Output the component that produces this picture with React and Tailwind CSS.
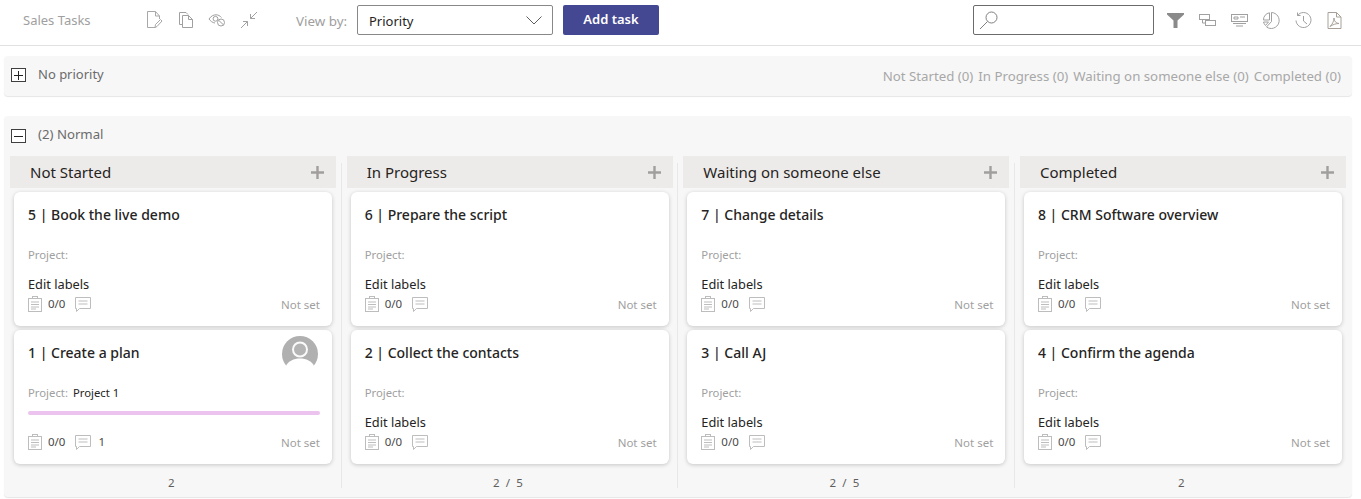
const font = "font-['Noto_Sans',sans-serif]"

function IconNote() {
  return (
    <svg width="18" height="20" viewBox="0 0 18 20" fill="none" stroke="#a8a8a8" strokeWidth="1">
      <path d="M10 17.5H2.5V1.5H10.5L14.5 6V9" />
      <path d="M10.5 1.5V6H14.5" />
      <path d="M10 17.5L10.5 14.5L15.5 9.5L17 11L12 16.5Z" />
    </svg>
  )
}

function IconCopy() {
  return (
    <svg width="16" height="18" viewBox="0 0 16 18" fill="none" stroke="#a0a0a0" strokeWidth="1">
      <path d="M4.5 13.5H1.5V1.5H8L10 3.5" />
      <path d="M4.5 4.5H10.5L14.5 8.5V16.5H4.5Z" />
      <path d="M10.5 4.5V8.5H14.5" />
    </svg>
  )
}

function IconEyeOff() {
  return (
    <svg width="18" height="14" viewBox="0 0 18 14" fill="none" stroke="#a0a0a0" strokeWidth="1">
      <path d="M1 6C3 3 5.5 1.8 8 1.8C10 1.8 12 2.8 13.5 4.5" />
      <path d="M1 6C2.5 8.2 4.5 9.6 7 10" />
      <circle cx="7.5" cy="5.8" r="2.4" />
      <circle cx="13" cy="9.5" r="3.5" />
      <path d="M10.6 7.2L15.4 11.8" />
    </svg>
  )
}

function IconCollapse() {
  return (
    <svg width="18" height="18" viewBox="0 0 18 18" fill="none" stroke="#a0a0a0" strokeWidth="1">
      <path d="M17 1L10.5 7.5M10.5 3V7.5H15" />
      <path d="M1 17L7.5 10.5M3 10.5H7.5V15" />
    </svg>
  )
}

function IconSearch() {
  return (
    <svg width="20" height="20" viewBox="0 0 20 20" fill="none" stroke="#808080" strokeWidth="1">
      <circle cx="12.5" cy="7.5" r="5.5" />
      <path d="M8.5 11.5L1 19" />
    </svg>
  )
}

function IconFilter() {
  return (
    <svg width="17" height="15" viewBox="0 0 17 15" fill="#8a8a8a">
      <path d="M0 0H17V1.5L10.5 7.5V15H6.5V7.5L0 1.5Z" />
    </svg>
  )
}

function IconHierarchy() {
  return (
    <svg width="17" height="12" viewBox="0 0 17 12" fill="none" stroke="#a0a0a0" strokeWidth="1">
      <rect x="0.5" y="0.5" width="10" height="5" />
      <rect x="6.5" y="6.5" width="10" height="5" />
      <path d="M3.5 5.5V9H6.5" />
    </svg>
  )
}

function IconBoard() {
  return (
    <svg width="17" height="13" viewBox="0 0 17 13" fill="none" stroke="#a0a0a0" strokeWidth="1">
      <rect x="0.5" y="0.5" width="16" height="7" />
      <path d="M3 3H7V5H3ZM9 3H14" />
      <path d="M2 9.5H15M5 12H12" />
    </svg>
  )
}

function IconPie() {
  return (
    <svg width="17" height="17" viewBox="0 0 17 17" fill="none" stroke="#a0a0a0" strokeWidth="1">
      <path d="M8.5 0.5A8 8 0 1 1 3.5 15L8.5 9.5Z" />
      <path d="M6.5 0.8A7 7 0 0 0 0.5 8H6.5Z" />
      <path d="M0.5 10H5.5L2.5 13.5A7 7 0 0 1 0.5 10Z" />
    </svg>
  )
}

function IconHistory() {
  return (
    <svg width="17" height="17" viewBox="0 0 17 17" fill="none" stroke="#a0a0a0" strokeWidth="1">
      <path d="M2.5 3.5A7.5 7.5 0 1 1 1 8.5" />
      <path d="M2.5 0.5V3.5H5.5" />
      <path d="M8.5 4V9L12 12" />
    </svg>
  )
}

function IconPdf() {
  return (
    <svg width="15" height="17" viewBox="0 0 15 17" fill="none" stroke="#a8a098" strokeWidth="1">
      <path d="M1 0.5H9.5L14 5V16.5H1Z" />
      <path d="M9.5 0.5V5H14" />
      <path d="M3 14.5C5 13 7 9 7 6C7 9 9 11.5 12 11.5C9 11.5 6 12.5 3 14.5Z" />
    </svg>
  )
}

function IconTasks() {
  return (
    <svg width="14" height="16" viewBox="0 0 14 16" fill="none" stroke="#bdbdbd" strokeWidth="1">
      <rect x="0.5" y="2.5" width="13" height="13" />
      <rect x="4.5" y="0.5" width="5" height="2" />
      <path d="M3 6H11M3 8.5H11M3 11H11M3 13H8" />
    </svg>
  )
}

function IconComment() {
  return (
    <svg width="16" height="15" viewBox="0 0 16 15" fill="none" stroke="#bdbdbd" strokeWidth="1">
      <path d="M0.5 0.5H15.5V11.5H4.5L1.5 14.5V11.5H0.5Z" />
      <path d="M3.5 4H12.5M3.5 7H12.5" />
    </svg>
  )
}

function Toggle({ open }) {
  return (
    <span className="flex h-[14px] w-[15px] items-center justify-center border border-[#3f3f3f] bg-white">
      <svg width="9" height="9" viewBox="0 0 9 9" stroke="#222" strokeWidth="1">
        <path d="M0 4.5H9" />
        {!open && <path d="M4.5 0V9" />}
      </svg>
    </span>
  )
}

function Avatar() {
  return (
    <svg width="36" height="36" viewBox="0 0 36 36">
      <circle cx="18" cy="18" r="18" fill="#b0b0b0" />
      <circle cx="18" cy="13.5" r="7" fill="#b4b4b4" stroke="#fafafa" strokeWidth="2" />
      <path d="M4 30C6 25 12 22.5 18 22.5C24 22.5 30 25 32 30V36H4Z" fill="#fff" />
    </svg>
  )
}

function Card({ id, title, project, count }) {
  return (
    <div className="flex h-[134px] flex-col rounded-md bg-white pl-[14px] pr-[12px] shadow-[0_1px_4px_rgba(0,0,0,0.2)]">
      <div className="flex h-[46px] items-start justify-between">
        <div className="mt-[10px] h-[26px] text-[14px] leading-[26px] font-medium text-[#252423]">
          {id} | {title}
        </div>
        {project && (
          <div className="mr-[2px] mt-[6px]">
            <Avatar />
          </div>
        )}
      </div>
      <div className="mt-[9px] flex h-[16px] items-center gap-[5px] text-[11.3px] leading-[16px]">
        <span className="text-[#a0a0a0]">Project:</span>
        {project && <span className="text-[#252423]">{project}</span>}
      </div>
      <div className="h-[32px]">
        {project ? (
          <div className="mt-[10px] h-[4px] rounded-sm bg-[#ecc2ee]" />
        ) : (
          <div className="mt-[12px] h-[18px] text-[12.8px] leading-[18px] text-[#252423]">Edit labels</div>
        )}
      </div>
      <div className="flex h-[18px] items-center text-[11.5px] text-[#4a4a4a]">
        <IconTasks />
        <span className="ml-[6px]">0/0</span>
        <span className="ml-[10px] flex">
          <IconComment />
        </span>
        {count && <span className="ml-[7px]">{count}</span>}
        <span className="ml-auto pt-[2px] text-[#a0a0a0]">Not set</span>
      </div>
    </div>
  )
}

const columns = [
  {
    name: "Not Started",
    footer: "2",
    cards: [
      { id: 5, title: "Book the live demo" },
      { id: 1, title: "Create a plan", project: "Project 1", count: "1" },
    ],
  },
  {
    name: "In Progress",
    footer: "2 / 5",
    cards: [
      { id: 6, title: "Prepare the script" },
      { id: 2, title: "Collect the contacts" },
    ],
  },
  {
    name: "Waiting on someone else",
    footer: "2 / 5",
    cards: [
      { id: 7, title: "Change details" },
      { id: 3, title: "Call AJ" },
    ],
  },
  {
    name: "Completed",
    footer: "2",
    cards: [
      { id: 8, title: "CRM Software overview" },
      { id: 4, title: "Confirm the agenda" },
    ],
  },
]

function Column({ column }) {
  return (
    <div className="w-[326px] shrink-0">
      <div className="flex h-[32px] items-center justify-between bg-[#edebe9] pl-[20px] pr-[12px]">
        <span className="text-[15px] text-[#252423]">{column.name}</span>
        <svg width="13" height="13" viewBox="0 0 13 13" stroke="#a19f9d" strokeWidth="2.4">
          <path d="M0 6.5H13M6.5 0V13" />
        </svg>
      </div>
      <div className="mt-[4px] flex flex-col gap-[4px] px-[4px]">
        {column.cards.map((card) => (
          <Card key={card.id} {...card} />
        ))}
      </div>
      <div className="mt-[9px] pr-[2px] text-center text-[11.5px] leading-[20px] tracking-[1.6px] text-[#605e5c]">
        {column.footer}
      </div>
    </div>
  )
}

export default function App() {
  return (
    <div className={`h-[499px] w-[1361px] overflow-hidden bg-white ${font}`}>
      <header className="flex h-[46px] items-center border-b border-[#e1e1e1] pb-[5px] pl-[23px] pr-[19px]">
        <span className="mt-[2px] w-[122px] text-[13px] text-[#a0a0a0]">Sales Tasks</span>
        <div className="flex items-center">
          <span className="w-[33px]"><IconNote /></span>
          <span className="w-[30px]"><IconCopy /></span>
          <span className="w-[32px]"><IconEyeOff /></span>
          <IconCollapse />
        </div>
        <span className="ml-[38px] mt-[2px] w-[52px] text-[13.4px] text-[#a0a0a0]">View by:</span>
        <div className="ml-[9px] flex h-[30px] w-[196px] items-center justify-between rounded-[2px] border border-[#8a8886] pl-[11px] pr-[10px] text-[13px] text-[#252423]">
          <span className="mt-[4px]">Priority</span>
          <svg width="16" height="9" viewBox="0 0 16 9" fill="none" stroke="#605e5c" strokeWidth="1">
            <path d="M0.5 0.5L8 8L15.5 0.5" />
          </svg>
        </div>
        <button className="ml-[10px] h-[30px] w-[96px] rounded-[2px] bg-[#444791] text-[13px] font-semibold text-white">
          Add task
        </button>
        <div className="ml-auto flex h-[30px] w-[181px] items-center rounded-[2px] border border-[#6b6b6b] pl-[5px]">
          <IconSearch />
        </div>
        <div className="ml-[13px] flex items-center gap-[15px]">
          <IconFilter />
          <IconHierarchy />
          <IconBoard />
          <IconPie />
          <IconHistory />
          <IconPdf />
        </div>
      </header>

      <section className="mx-[4px] mt-[10px] flex h-[40px] w-[1348px] items-center justify-between rounded-sm bg-[#f7f7f7] pl-[7px] pr-[11px] shadow-[0_1px_1px_rgba(0,0,0,0.1)]">
        <div className="-mt-[2px] flex items-center">
          <Toggle />
          <span className="ml-[12px] text-[13px] text-[#6b6b6b]">No priority</span>
        </div>
        <div className="mt-[2px] flex gap-[5px] text-[13.25px] text-[#a8a8a8]">
          <span>Not Started (0)</span>
          <span>In Progress (0)</span>
          <span>Waiting on someone else (0)</span>
          <span>Completed (0)</span>
        </div>
      </section>

      <section className="mx-[4px] mt-[20px] h-[381px] w-[1348px] rounded-sm bg-[#f7f7f7] px-[6px] shadow-[0_1px_1px_rgba(0,0,0,0.1)]">
        <div className="flex h-[40px] items-center pl-[1px]">
          <Toggle open />
          <span className="ml-[12px] -mt-[2px] text-[13.2px] text-[#6b6b6b]">(2) Normal</span>
        </div>
        <div className="flex">
          {columns.map((column, i) => (
            <div key={column.name} className="flex">
              <Column column={column} />
              {i < columns.length - 1 && (
                <div className="mx-[4.83px] mb-[5px] mt-[7px] w-px bg-[#e8e8e8]" />
              )}
            </div>
          ))}
        </div>
      </section>
    </div>
  )
}
